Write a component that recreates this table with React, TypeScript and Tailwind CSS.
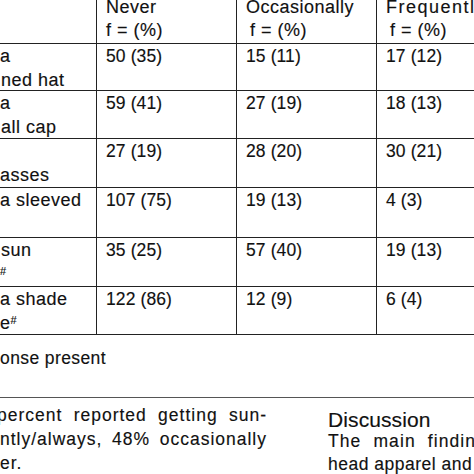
import React from "react";

type Row = {
  label: React.ReactNode[];
  h: string;
  pl: string[];
  v: [string, string, string];
};

const rows: Row[] = [
  { label: ["a", "ned hat"], pl: ["pl-0", "pl-[1px]"], h: "h-[47px]", v: ["50 (35)", "15 (11)", "17 (12)"] },
  { label: ["a", "all cap"], pl: ["pl-0", "pl-[1px]"], h: "h-[48px]", v: ["59 (41)", "27 (19)", "18 (13)"] },
  { label: ["\u00a0", "asses"], pl: ["pl-0", "pl-0"], h: "h-[49px]", v: ["27 (19)", "28 (20)", "30 (21)"] },
  { label: ["a sleeved", "\u00a0"], pl: ["pl-0", "pl-0"], h: "h-[50px]", v: ["107 (75)", "19 (13)", "4 (3)"] },
  {
    label: ["sun", <sup key="s" className="text-[11px]">#</sup>],
    pl: ["pl-[1px]", "pl-0"],
    h: "h-[49px]",
    v: ["35 (25)", "57 (40)", "19 (13)"],
  },
  {
    label: ["a shade", <span key="e">e<sup className="text-[11px]">#</sup></span>],
    pl: ["pl-0", "pl-0"],
    h: "h-[48px]",
    v: ["122 (86)", "12 (9)", "6 (4)"],
  },
];

export default function App() {
  return (
    <div className="w-[474px] h-[474px] overflow-hidden bg-white text-[#111] text-[17.5px] [font-family:'Liberation_Sans',Arial,sans-serif] [-webkit-text-stroke:0.15px_#111]">
      {/* table */}
      <div className="-mt-1">
        <div className="grid grid-cols-[96px_140px_140px_140px] h-[48px] border-b border-[#222] text-[18px] leading-[22.5px] tracking-[0.5px] whitespace-nowrap">
          <div />
          <div className="border-l border-[#222] pl-[9px]">
            <div>Never</div>
            <div>f = (%)</div>
          </div>
          <div className="border-l border-[#222] pl-[9px]">
            <div>Occasionally</div>
            <div className="pl-[4px]">f = (%)</div>
          </div>
          <div className="border-l border-[#222] pl-[9px]">
            <div className="tracking-[1.5px]">Frequently/</div>
            <div className="pl-[4px]">f = (%)</div>
          </div>
        </div>
        {rows.map((r, i) => (
          <div
            key={i}
            className={`grid grid-cols-[96px_140px_140px_140px] ${r.h} border-b border-[#222] leading-[24px] whitespace-nowrap`}
          >
            <div className="text-[18px] tracking-[0.5px]">
              <div className={r.pl[0]}>{r.label[0]}</div>
              <div className={r.pl[1]}>{r.label[1]}</div>
            </div>
            {r.v.map((t, j) => (
              <div key={j} className="border-l border-[#222] pl-[9px] tracking-[0.1px]">
                {t}
              </div>
            ))}
          </div>
        ))}
      </div>

      {/* footnote */}
      <div className="mt-[11px] leading-[24px] tracking-[0.4px] whitespace-nowrap">onse present</div>

      {/* rule */}
      <div className="mt-[27px] h-px bg-[#555]" />

      {/* body text */}
      <div className="flex">
        <div className="w-[267px] shrink-0 pt-[5px] leading-[24px] tracking-[1px]">
          <div className="-ml-[3px] text-justify [text-align-last:justify] whitespace-nowrap">
            percent reported getting sun-
          </div>
          <div className="text-justify [text-align-last:justify]">ntly/always, 48% occasionally</div>
          <div>er.</div>
        </div>
        <div className="ml-[61px] pt-[12px] whitespace-nowrap">
          <div className="text-[21px] leading-[20px] tracking-[0.1px]">Discussion</div>
          <div className="leading-[23px] tracking-[1.1px] [word-spacing:6px]">The main findings of this</div>
          <div className="leading-[23px] tracking-[0.5px]">head apparel and</div>
        </div>
      </div>
    </div>
  );
}
